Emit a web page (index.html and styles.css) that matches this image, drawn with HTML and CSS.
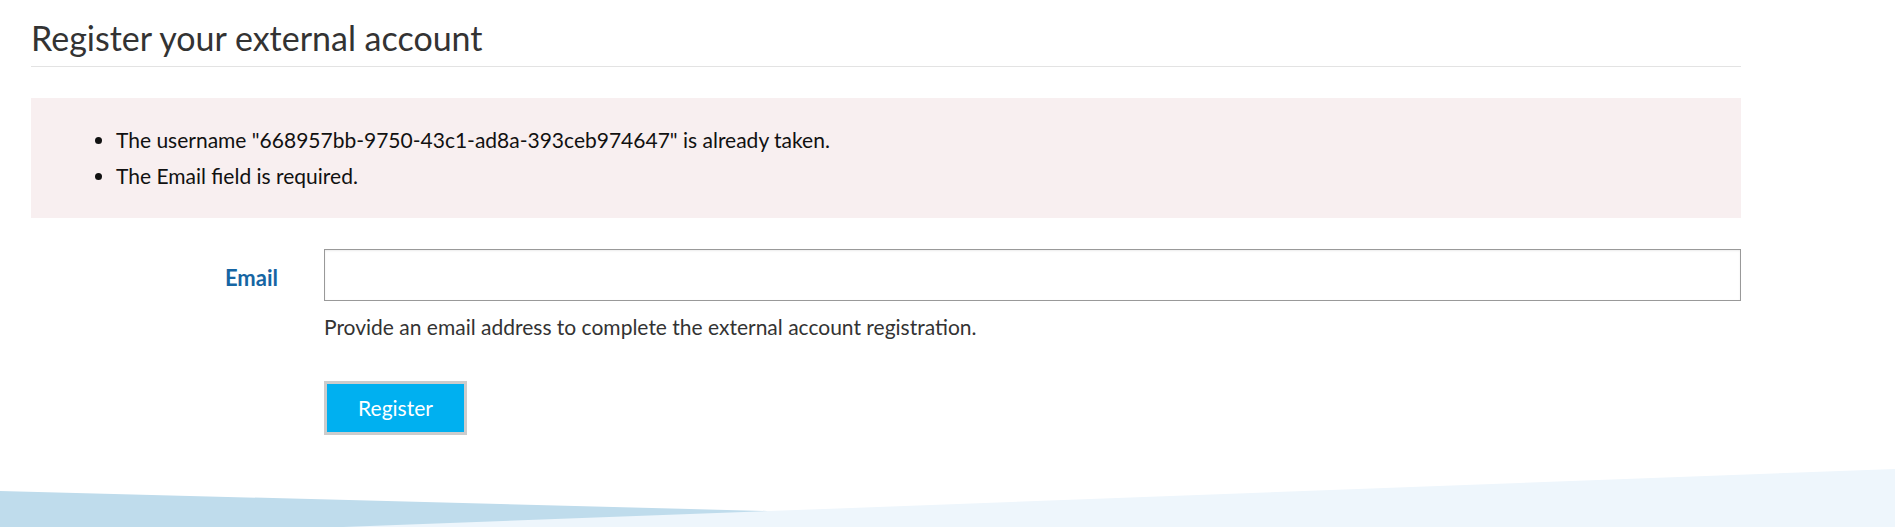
FILE: index.html
```html
<!DOCTYPE html>
<html lang="en">
<head>
<meta charset="utf-8">
<title>Register your external account</title>
<link rel="stylesheet" href="styles.css">
</head>
<body>
<main class="page">
  <h1 class="title">Register your external account</h1>
  <div class="errors">
    <ul class="error-list">
      <li>The username "668957bb-9750-43c1-ad8a-393ceb974647" is already taken.</li>
      <li>The Email field is required.</li>
    </ul>
  </div>
  <form class="form">
    <label class="label" for="email">Email</label>
    <div class="field">
      <input class="input" id="email" type="email">
      <p class="help">Provide an email address to complete the external account registration.</p>
      <button class="btn" type="button">Register</button>
    </div>
  </form>
</main>
<footer class="footer">
  <svg class="wave" viewBox="0 0 1895 58" preserveAspectRatio="none" aria-hidden="true">
    <polygon points="0,22 767,42 767,58 0,58" fill="#bfdcec"/>
    <polygon points="343,58 1895,0 1895,58" fill="#eef6fc"/>
  </svg>
</footer>
</body>
</html>
```
FILE: styles.css
```css
html, body {
  margin: 0;
  padding: 0;
  background: #fff;
}
body {
  font-family: Lato, "Open Sans", "Liberation Sans", sans-serif;
  color: #333;
}
.page {
  width: 1710px;
  margin-left: 31px;
}
.title {
  margin: 18px 0 0 0;
  padding: 0 0 8px 0;
  font-size: 34px;
  line-height: 40px;
  font-weight: 400;
  color: #333;
  border-bottom: 1px solid #e3e3e3;
}
.errors {
  margin-top: 31px;
  background: #f8eff0;
  padding: 24px 0 24px 45px;
}
.error-list {
  margin: 0;
  padding-left: 40px;
  font-size: 21px;
  line-height: 36px;
  color: #111;
}
.form {
  margin-top: 31px;
  display: grid;
  grid-template-columns: 293px 1fr;
}
.label {
  justify-self: end;
  padding: 16px 46px 0 0;
  font-size: 22px;
  line-height: 26px;
  font-weight: 700;
  color: #1665a3;
}
.field {
  display: flex;
  flex-direction: column;
  align-items: flex-start;
}
.input {
  box-sizing: border-box;
  width: 100%;
  height: 52px;
  margin: 0;
  border: 1px solid #999;
  box-shadow: inset 0 1px 2px rgba(0,0,0,0.08);
  font: inherit;
  background: #fff;
}
.help {
  margin: 13px 0 0 0;
  font-size: 21px;
  line-height: 25px;
  color: #333;
}
.btn {
  margin-top: 42px;
  box-sizing: border-box;
  width: 143px;
  height: 54px;
  border: 3px solid #cccccc;
  background: #00b0f0;
  color: #fff;
  font-family: Lato, "Open Sans", sans-serif;
  font-size: 21px;
  line-height: 24px;
  padding: 0;
}
.footer {
  margin-top: 34px;
  height: 58px;
}
.wave {
  display: block;
  width: 100%;
  height: 58px;
}
```
